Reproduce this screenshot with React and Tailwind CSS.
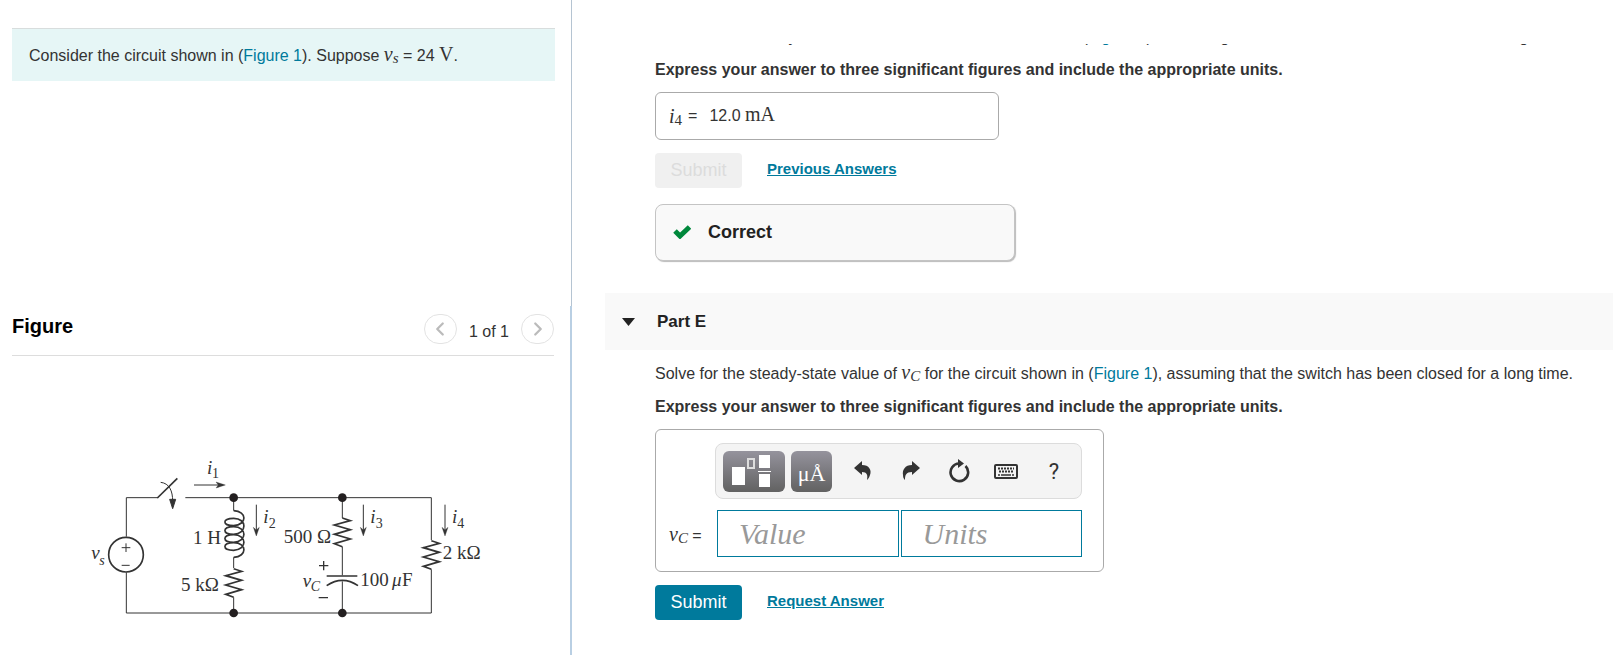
import React from "react";
import { ChevronLeft, ChevronRight } from "lucide-react";

const MathVar = ({ base, sub, upright = false }) => (
  <span className="font-['Liberation_Serif',serif] text-xl leading-none italic">
    {base}
    <sub className={upright ? "-bottom-0.5 text-[15px] not-italic" : "-bottom-0.5 text-[15px]"}>
      {sub}
    </sub>
  </span>
);

const Question = ({ variable }) => (
  <p className="h-6 text-base leading-6 whitespace-nowrap">
    Solve for the steady-state value of {variable} for the circuit shown in (
    <a href="#figure" className="text-[#007a9c]">
      Figure 1
    </a>
    ), assuming that the switch has been closed for a long time.
  </p>
);

const Instructions = () => (
  <p className="mt-[9px] text-base leading-6 font-bold whitespace-nowrap">
    Express your answer to three significant figures and include the appropriate units.
  </p>
);

const Resistor = ({ x, y }) => (
  <path
    d={`M${x} ${y} l24 8 l-48 13 l48 14 l-48 14 l48 14 l-48 14 l24 9`}
    strokeWidth="5"
  />
);

const DownArrow = ({ x }) => (
  <g>
    <path d={`M${x} 194 V280`} />
    <path d={`M${x - 9} 262 L${x} 288 L${x + 9} 262 L${x} 270 Z`} fill="#333" strokeWidth="1" />
  </g>
);

const Circuit = () => (
  <svg
    viewBox="0 0 1290 600"
    className="block h-[200px] w-[430px] font-['Liberation_Serif',serif]"
    role="img"
    aria-label="Circuit diagram"
  >
    <g fill="none" stroke="#333" strokeWidth="3">
      {/* Wires */}
      <path d="M169 290 V173 H264" />
      <path d="M346 173 H1084 V300 M1084 388 V519 H169 V397" />
      <path d="M491 173 V212 M491 352 V384 M491 472 V519" />
      <path d="M817 173 V234 M817 320 V406 M817 424 V519" />

      {/* Switch */}
      <path d="M262 174 L322 115" strokeWidth="5" />
      <path d="M272 127 C298 130 308 152 308 184" />
      <path d="M299 178 L308 206 L317 178 Z" fill="#333" />

      {/* Current arrows */}
      <path d="M372 135 H460" />
      <path d="M438 126 L466 135 L438 144 L445 135 Z" fill="#333" strokeWidth="1" />
      <DownArrow x={559} />
      <DownArrow x={880} />
      <DownArrow x={1125} />

      {/* Source */}
      <circle cx="168" cy="344" r="52" strokeWidth="5" />
      <path d="M155 323 H181 M168 310 V336 M155 376 H179" />

      {/* Inductor */}
      <path
        d="M491 212 C532 214 532 254 491 257 C456 257 456 235 491 235 C532 235 532 281 491 283 C456 283 456 260 491 260 C532 260 532 305 491 307 C456 307 456 284 491 284 C532 284 532 329 491 331 C456 331 456 308 491 308 C532 308 532 350 491 352"
        strokeWidth="5"
      />

      <Resistor x={491} y={386} />
      <Resistor x={817} y={234} />
      <Resistor x={1084} y={302} />

      {/* Capacitor */}
      <path d="M770 408 H862 M770 437 Q817 405 864 437" strokeWidth="5" />
      <path d="M747 377 H775 M761 363 V391 M746 473 H774" strokeWidth="4" />
    </g>
    <g fill="#231f20">
      <circle cx="491" cy="173" r="13" />
      <circle cx="817" cy="173" r="13" />
      <circle cx="491" cy="519" r="13" />
      <circle cx="817" cy="519" r="13" />
    </g>
    <g fill="#333" fontSize="57">
      <text x="411" y="101" fontStyle="italic">i</text>
      <text x="426" y="114" fontSize="42">1</text>
      <text x="580" y="250" fontStyle="italic">i</text>
      <text x="596" y="263" fontSize="42">2</text>
      <text x="901" y="250" fontStyle="italic">i</text>
      <text x="917" y="263" fontSize="42">3</text>
      <text x="1146" y="250" fontStyle="italic">i</text>
      <text x="1162" y="263" fontSize="42">4</text>
      <text x="64" y="358" fontStyle="italic">v</text>
      <text x="88" y="374" fontSize="42" fontStyle="italic">s</text>
      <text x="698" y="440" fontStyle="italic">v</text>
      <text x="722" y="453" fontSize="42" fontStyle="italic">C</text>
      <text x="369" y="312">1 H</text>
      <text x="333" y="454">5 kΩ</text>
      <text x="641" y="308">500 Ω</text>
      <text x="1118" y="357">2 kΩ</text>
      <text x="871" y="438">100</text>
      <text x="966" y="438" fontStyle="italic">μ</text>
      <text x="996" y="438">F</text>
    </g>
  </svg>
);

const toolIcon = "flex h-8 w-8 items-center justify-center text-[#333]";
const templateButton =
  "flex h-[41px] items-center rounded-md bg-gradient-to-b from-[#95939d] to-[#626262] text-white";

const Toolbar = () => (
  <div className="flex h-14 items-center rounded-lg border border-[#dcdcdc] bg-[#f4f4f4] px-[7px]">
    <button aria-label="Templates" className={`${templateButton} w-[62px] pl-[9px]`}>
      <svg width="40" height="33" viewBox="0 0 40 33" fill="#fff">
        <rect x="0" y="12" width="13" height="18" />
        <rect x="16" y="4" width="6" height="9" fill="none" stroke="#ddd" strokeWidth="2" />
        <rect x="27" y="0" width="11" height="13" />
        <rect x="26" y="16" width="13" height="1" />
        <rect x="27" y="19" width="11" height="13" />
      </svg>
    </button>
    <button
      aria-label="Symbols"
      className={`${templateButton} ml-1.5 w-[41px] justify-center pt-1 font-['Liberation_Serif',serif] text-[22px]`}
    >
      μÅ
    </button>
    <div className="flex flex-1 items-center justify-between pr-1 pl-[15px]">
      <button aria-label="Undo" className={toolIcon}>
        <svg width="18" height="20" viewBox="0 0 18 20" fill="currentColor">
          <path d="M0 7 L8 0 V4 C15 4 18 9 16 14 C15 17 14 18 13 19 C14 14 13 11 8 11 V14 Z" />
        </svg>
      </button>
      <button aria-label="Redo" className={toolIcon}>
        <svg width="18" height="20" viewBox="0 0 18 20" fill="currentColor">
          <path d="M18 7 L10 0 V4 C3 4 0 9 1 14 C1 17 2 18 3 19 C3 14 4 11 10 11 V14 Z" />
        </svg>
      </button>
      <button aria-label="Reset" className={toolIcon}>
        <svg width="22" height="24" viewBox="0 0 22 24" fill="none">
          <path d="M17.5 7 A8.8 8.8 0 1 1 11 4.5" stroke="currentColor" strokeWidth="2.6" />
          <path d="M10 0 L16 4.5 L10 9 Z" fill="currentColor" />
        </svg>
      </button>
      <button aria-label="Keyboard" className={toolIcon}>
        <svg width="24" height="15" viewBox="0 0 24 15" fill="none" stroke="currentColor">
          <rect x="1" y="1" width="22" height="13" rx="1" strokeWidth="2" />
          <path d="M4 4.5 H20 M5 7.5 H20" strokeWidth="2" strokeDasharray="2 1" />
          <path d="M4 11 H6 M7 11 H17 M18 11 H20" strokeWidth="1.5" />
        </svg>
      </button>
      <button aria-label="Help" className={`${toolIcon} font-['Roboto',sans-serif] text-[22px]`}>
        ?
      </button>
    </div>
  </div>
);

const pagerButton =
  "flex h-[30px] w-[33px] items-center justify-center rounded-full border border-[#e3e3e3] text-[#bbb]";
const answerInput =
  "h-[47px] min-w-0 flex-1 border border-[#007a9c] pl-[21px] font-['Liberation_Serif',serif] text-3xl italic placeholder:text-[#999]";
const actionLink = "pb-0.5 text-[15px] font-bold text-[#007a9c] underline";

const App = () => (
  <div className="flex min-h-screen overflow-hidden bg-white font-['Liberation_Sans',Arial,sans-serif] text-[#333]">
    {/* Problem and figure */}
    <aside className="flex w-[572px] shrink-0 flex-col">
      <div className="h-[306px] border-r border-[#b5c4d2] pt-7 pr-4 pl-3">
        <p className="border-t border-[#d8dddd] bg-[#e6f6f6] px-[17px] pt-[15px] pb-[13px] text-base leading-6">
          Consider the circuit shown in (
          <a href="#figure" className="text-[#007a9c]">
            Figure 1
          </a>
          ). Suppose <MathVar base="v" sub="s" /> = 24{" "}
          <span className="font-['Liberation_Serif',serif] text-xl leading-none">V</span>.
        </p>
      </div>
      <div id="figure" className="flex-1 border-r-2 border-[#b9cfe3] pr-4 pl-3">
        <div className="flex h-[50px] items-start justify-between border-b border-[#ddd] pt-2">
          <h2 className="text-xl leading-6 font-bold text-black">Figure</h2>
          <div className="flex items-center gap-3 text-base">
            <button aria-label="Previous figure" className={pagerButton}>
              <ChevronLeft size={22} strokeWidth={2.5} />
            </button>
            <span className="pt-1.5">1 of 1</span>
            <button aria-label="Next figure" className={pagerButton}>
              <ChevronRight size={22} strokeWidth={2.5} />
            </button>
          </div>
        </div>
        <div className="mt-[84px] ml-[58px]">
          <Circuit />
        </div>
      </div>
    </aside>

    {/* Parts, scrolled so that the previous question is almost out of view */}
    <main className="min-w-0 flex-1 pt-11 pl-[33px]">
      <div className="overflow-hidden">
        <section className="-mt-[19px] pl-[50px]">
          <Question variable={<MathVar base="i" sub="4" upright />} />
          <Instructions />
          <div className="mt-[10px] flex h-12 w-[344px] items-center rounded-md border border-[#aaa] px-[13px]">
            <MathVar base="i" sub="4" upright />
            <span className="ml-1.5">=</span>
            <span className="ml-3">
              12.0 <span className="font-['Liberation_Serif',serif] text-xl leading-none">mA</span>
            </span>
          </div>
          <div className="mt-[13px] flex items-center gap-[25px]">
            <button disabled className="h-[35px] w-[87px] rounded-sm bg-[#f0f0f0] pb-0.5 text-lg text-[#dcdcdc]">
              Submit
            </button>
            <a href="#previous" className={actionLink}>
              Previous Answers
            </a>
          </div>
          <div className="mt-4 flex h-[57px] w-[360px] items-center gap-[17px] rounded-lg border border-[#c4c4c4] bg-[#f9f9f9] pb-0.5 pl-[17px] text-lg font-bold text-[#222] shadow-[1px_1px_1px_#bbb]">
            <svg width="18" height="14" viewBox="0 0 18 14" fill="none">
              <path d="M2 6 L7 11 L16.5 2" stroke="#00883c" strokeWidth="5" />
            </svg>
            Correct
          </div>
        </section>

        <section className="mt-8">
          <h2 className="flex h-[57px] items-center bg-[#f9f9f9] text-[17px] font-bold text-[#222]">
            <button className="flex w-full items-center gap-[22px] pl-[17px]">
              <svg width="13" height="8" viewBox="0 0 13 8" fill="#222">
                <path d="M0 0 H13 L6.5 8 Z" />
              </svg>
              Part E
            </button>
          </h2>
          <div className="mt-3 pl-[50px]">
            <Question variable={<MathVar base="v" sub="C" />} />
            <Instructions />
            <div className="mt-[10px] w-[449px] rounded-md border border-[#aaa] pt-[13px] pr-[21px] pb-[14px] pl-[13px]">
              <div className="ml-[46px]">
                <Toolbar />
              </div>
              <div className="mt-[11px] flex items-center">
                <div className="w-12 shrink-0 pt-1">
                  <MathVar base="v" sub="C" /> =
                </div>
                <div className="flex min-w-0 flex-1 gap-0.5">
                  <input aria-label="Value" placeholder="Value" className={answerInput} />
                  <input aria-label="Units" placeholder="Units" className={answerInput} />
                </div>
              </div>
            </div>
            <div className="mt-[13px] flex items-center gap-[25px]">
              <button className="h-[35px] w-[87px] rounded-sm bg-[#007a9c] pb-0.5 text-lg text-white">
                Submit
              </button>
              <a href="#request" className={actionLink}>
                Request Answer
              </a>
            </div>
          </div>
        </section>
      </div>
    </main>
  </div>
);

export default App;
